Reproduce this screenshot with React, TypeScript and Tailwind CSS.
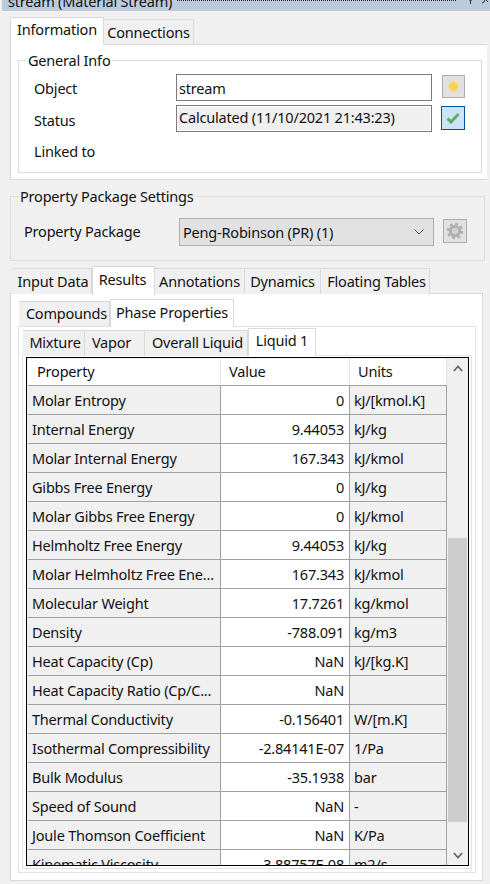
import React from "react";

const rows: [string, string, string][] = [
  ["Molar Entropy", "0", "kJ/[kmol.K]"],
  ["Internal Energy", "9.44053", "kJ/kg"],
  ["Molar Internal Energy", "167.343", "kJ/kmol"],
  ["Gibbs Free Energy", "0", "kJ/kg"],
  ["Molar Gibbs Free Energy", "0", "kJ/kmol"],
  ["Helmholtz Free Energy", "9.44053", "kJ/kg"],
  ["Molar Helmholtz Free Ene...", "167.343", "kJ/kmol"],
  ["Molecular Weight", "17.7261", "kg/kmol"],
  ["Density", "-788.091", "kg/m3"],
  ["Heat Capacity (Cp)", "NaN", "kJ/[kg.K]"],
  ["Heat Capacity Ratio (Cp/C...", "NaN", ""],
  ["Thermal Conductivity", "-0.156401", "W/[m.K]"],
  ["Isothermal Compressibility", "-2.84141E-07", "1/Pa"],
  ["Bulk Modulus", "-35.1938", "bar"],
  ["Speed of Sound", "NaN", "-"],
  ["Joule Thomson Coefficient", "NaN", "K/Pa"],
  ["Kinematic Viscosity", "-3.88757E-08", "m2/s"],
];

function Tab({ label, active, className }: { label: string; active?: boolean; className: string }) {
  return active ? (
    <div className={`relative z-10 -mb-px flex items-start justify-center border border-b-0 border-[#d9d9d9] bg-white text-[#111] ${className}`}>
      {label}
    </div>
  ) : (
    <div className={`mt-[2px] flex items-start justify-center border border-b-0 border-l-0 border-[#d9d9d9] bg-[#f0f0f0] text-[#111] ${className}`}>
      {label}
    </div>
  );
}

function Legend({ children, className }: { children: React.ReactNode; className: string }) {
  return <span className={`absolute top-[-11px] left-[7px] px-[2px] leading-[20px] ${className}`}>{children}</span>;
}

export default function App() {
  return (
    <div
      className="h-[884px] w-[490px] overflow-hidden bg-[#f0f0f0] text-[14.5px] leading-[20px] text-[#111]"
      style={{ fontFamily: '"Noto Sans", sans-serif', letterSpacing: "-0.2px" }}
    >
      {/* Title bar */}
      <div className="ml-[2px] flex h-[11px] items-end overflow-hidden bg-[#bccbdc] pl-[6px]">
        <span className="whitespace-nowrap leading-[20px]">stream (Material Stream)</span>
        <div className="mb-[10px] ml-[5px] mr-[12px] h-[1px] flex-1 border-t border-dotted border-[#222]" />
        <svg className="mb-[7px] shrink-0" width="22" height="4" viewBox="0 0 22 4">
          <path d="M2.5 0v4M1 0h3M14 3l2-1 1-2M18 0l2 2" fill="none" stroke="#333" />
        </svg>
      </div>

      {/* Information tabs */}
      <div className="ml-[10px] mt-[6px] flex h-[27px] w-[470px]">
        <Tab label="Information" active className="h-[28px] w-[94px] pt-[1px]" />
        <Tab label="Connections" className="h-[25px] w-[90px] pt-[2px]" />
      </div>
      <div className="ml-[10px] h-[136px] w-[477px] border border-r-0 border-[#d9d9d9] bg-white px-[7px] pt-[15px]">
        <div className="relative h-[113px] w-[464px] border border-[#dcdcdc] pl-[15px] pt-[13px]">
          <Legend className="bg-white">General Info</Legend>
          <div className="flex h-[31px] items-start">
            <span className="w-[142px] pt-[4px]">Object</span>
            <div className="h-[27px] w-[256px] border border-[#7a7a7a] bg-white pl-[2px] pt-[3px]">stream</div>
            <div className="ml-[10px] mt-[1px] flex h-[23px] w-[23px] items-center justify-center border border-[#adadad] bg-[#e1e1e1]">
              <svg width="13" height="13" viewBox="0 0 13 13">
                <g stroke="#f8dc84" strokeWidth="1.4">
                  <path d="M6.5 .5v12M.5 6.5h12M2.3 2.3l8.4 8.4M10.7 2.3l-8.4 8.4" />
                </g>
                <circle cx="6.5" cy="6.5" r="4.4" fill="#f8d052" />
              </svg>
            </div>
          </div>
          <div className="flex h-[31px] items-start">
            <span className="w-[142px] pt-[5px]">Status</span>
            <div className="h-[27px] w-[256px] border border-[#7a7a7a] bg-white p-[1px]">
              <div className="h-[23px] bg-[#f0f0f0] pl-[1px]">Calculated (11/10/2021 21:43:23)</div>
            </div>
            <div className="ml-[9px] mt-[1px] flex h-[24px] w-[24px] items-center justify-center border-[1.5px] border-[#005499] bg-[#cce4f7]">
              <svg width="14" height="12" viewBox="0 0 14 12">
                <path d="M1.5 6.5 5 10l7.5-8" fill="none" stroke="#5fae62" strokeWidth="3" />
              </svg>
            </div>
          </div>
          <div className="pt-[5px]">Linked to</div>
        </div>
      </div>

      {/* Property package */}
      <div className="relative ml-[10px] mt-[16px] h-[65px] w-[475px] border border-[#dcdcdc] pl-[13px] pt-[21px]">
        <Legend className="bg-[#f0f0f0]">Property Package Settings</Legend>
        <div className="flex items-start">
          <span className="w-[155px] pt-[3px]">Property Package</span>
          <div className="flex h-[28px] w-[255px] items-center justify-between border border-[#adadad] bg-[#e1e1e1] pl-[3px] pr-[9px]">
            <span>Peng-Robinson (PR) (1)</span>
            <svg width="10" height="6" viewBox="0 0 10 6"><path d="M.5.5 5 5 9.5.5" fill="none" stroke="#555" /></svg>
          </div>
          <div className="ml-[9px] mt-[1px] flex h-[24px] w-[24px] items-center justify-center border border-[#adadad] bg-[#e1e1e1]">
            <svg width="18" height="18" viewBox="0 0 18 18">
              <circle cx="9" cy="9" r="4.6" fill="none" stroke="#b0b0b0" strokeWidth="3.2" />
              <circle cx="9" cy="9" r="7" fill="none" stroke="#b0b0b0" strokeWidth="2.6" strokeDasharray="2.8 2.7" />
              <circle cx="9" cy="9" r="2.4" fill="#d0d0d0" />
            </svg>
          </div>
        </div>
      </div>

      {/* Result tabs */}
      <div className="ml-[12px] mt-[5px] flex h-[27px]">
        <Tab label="Input Data" className="h-[26px] w-[80px] border-l pl-[3px] pt-[2px]" />
        <Tab label="Results" active className="h-[29px] w-[63px] pr-[2px] pt-[2px]" />
        <Tab label="Annotations" className="h-[26px] w-[90px] pt-[2px]" />
        <Tab label="Dynamics" className="h-[26px] w-[76px] pt-[2px]" />
        <Tab label="Floating Tables" className="h-[26px] w-[109px] pl-[3px] pt-[2px]" />
      </div>
      <div className="ml-[10px] h-[588px] w-[473px] border border-[#d9d9d9] bg-white px-[7px] pt-[5px]">
        <div className="ml-[1px] flex h-[27px]">
          <Tab label="Compounds" className="h-[25px] w-[91px] border-l pl-[5px] pt-[1px]" />
          <Tab label="Phase Properties" active className="h-[28px] w-[124px] pt-[2px]" />
        </div>
        <div className="h-[547px] w-[458px] border border-[#e3e3e3] px-[3px] pt-[1px]">
          <div className="ml-[1px] flex h-[27px]">
            <Tab label="Mixture" className="h-[26px] w-[62px] border-l pl-[3px] pt-[1px]" />
            <Tab label="Vapor" className="h-[26px] w-[60px] pr-[6px] pt-[1px]" />
            <Tab label="Overall Liquid" className="h-[26px] w-[103px] pl-[3px] pt-[1px]" />
            <Tab label="Liquid 1" active className="h-[28px] w-[68px] pt-[1px]" />
          </div>
          <div className="h-[514px] w-[450px] border border-[#e3e3e3] pl-[3px] pr-[2px] pt-[1px]">
            {/* Grid */}
            <div className="flex h-[509px] w-[443px] overflow-hidden border border-black bg-[#f0f0f0]">
              <div className="w-[420px] shrink-0">
                <div className="mt-[1px] ml-[1px] flex h-[27px] border-b border-[#a0a0a0] bg-white">
                  <div className="w-[193px] border-r border-[#e4e4e4] pl-[9px] pt-[2px]">Property</div>
                  <div className="w-[129px] border-r border-[#e4e4e4] pl-[8px] pt-[2px]">Value</div>
                  <div className="flex-1 border-r border-[#e4e4e4] pl-[8px] pt-[2px]">Units</div>
                </div>
                {rows.map(([p, v, u]) => (
                  <div key={p} className="ml-[1px] flex h-[29px] border-b border-[#a0a0a0]">
                    <div className="w-[193px] whitespace-nowrap border-r border-[#a0a0a0] bg-[#f0f0f0] pl-[4px] pt-[4px]">{p}</div>
                    <div className="w-[129px] border-r border-[#a0a0a0] bg-white pr-[5px] pt-[4px] text-right">{v}</div>
                    <div className="flex-1 border-r border-[#a0a0a0] bg-[#f0f0f0] pl-[4px] pt-[4px]">{u}</div>
                  </div>
                ))}
              </div>
              {/* Scrollbar */}
              <div className="flex w-[20px] shrink-0 flex-col pl-[1px]">
                <div className="flex h-[21px] shrink-0 items-center justify-center">
                  <svg width="10" height="7" viewBox="0 0 10 7"><path d="M.8 6 5 1.5 9.2 6" fill="none" stroke="#606060" strokeWidth="1.7" /></svg>
                </div>
                <div className="h-[159px] w-full shrink-0" />
                <div className="h-[284px] w-full shrink-0 bg-[#cdcdcd]" />
                <div className="mt-[23px] flex h-[21px] shrink-0 items-center justify-center">
                  <svg width="10" height="7" viewBox="0 0 10 7"><path d="M.8 1 5 5.5 9.2 1" fill="none" stroke="#606060" strokeWidth="1.7" /></svg>
                </div>
              </div>
            </div>
          </div>
        </div>
      </div>
    </div>
  );
}
